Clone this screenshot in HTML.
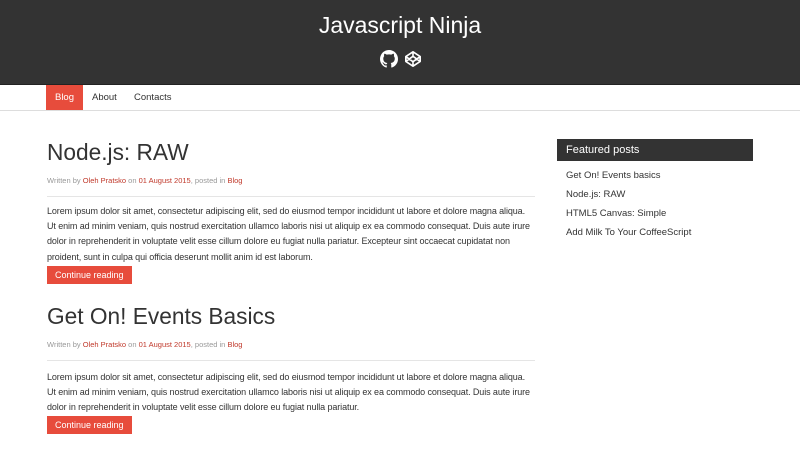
<!DOCTYPE html>
<html><head><meta charset="utf-8"><style>
*{margin:0;padding:0;box-sizing:border-box}
body{width:800px;height:450px;overflow:hidden;font-family:"Liberation Sans",sans-serif;background:#fff;color:#333}
.hd{height:85px;background:#333;text-align:center;color:#fff;border-bottom:1px solid #222}
.hd h1{font-weight:normal;font-size:23px;padding-top:11px;line-height:28px}
.ic{margin-top:11px;display:flex;justify-content:center;gap:6px;padding-left:2px}
.nav{height:26px;border-bottom:1px solid #ddd;position:relative;font-size:9.5px}
.nav a{position:absolute;top:0;height:25px;line-height:26px;color:#333;text-decoration:none}
.main{position:absolute;left:47px;top:137px;width:488px}
h2{font-weight:normal;font-size:22.7px;line-height:30px;color:#333}
.meta{font-size:7.5px;color:#999;margin-top:9px;padding-bottom:11px;border-bottom:1px solid #e5e5e5}
.meta span{color:#c0392b}
p{font-size:9px;letter-spacing:-0.1px;line-height:15.2px;margin-top:7px;color:#333;white-space:nowrap}
.btn{display:inline-block;background:#e74c3c;color:#fff;font-size:9px;height:18px;line-height:18px;padding:0 8px;margin-top:0}
.side{position:absolute;left:557px;top:139px;width:196px}
.side .t{background:#333;color:#fff;font-size:11px;height:22px;line-height:22px;padding-left:9px}
.side div.l{font-size:9.5px;padding-left:9px;height:19px;line-height:19px}
</style></head><body>
<div class="hd"><h1>Javascript Ninja</h1>
<div class="ic">
<svg width="18" height="18" viewBox="0 0 16 16"><path fill="#fff" d="M8 0C3.58 0 0 3.58 0 8c0 3.54 2.29 6.530 5.47 7.59.4.07.55-.17.55-.38 0-.19-.01-.82-.01-1.49-2.01.37-2.53-.49-2.690-.94-.09-.23-.48-.94-.82-1.13-.28-.15-.68-.52-.01-.53.63-.01 1.08.58 1.23.82.72 1.21 1.87.87 2.33.66.07-.52.28-.87.51-1.07-1.78-.2-3.64-.89-3.64-3.950 0-.87.31-1.59.82-2.15-.08-.2-.36-1.02.08-2.12 0 0 .67-.21 2.2.82.64-.18 1.32-.27 2-.27.68 0 1.36.09 2 .27 1.53-1.04 2.2-.82 2.2-.82.44 1.1.16 1.92.08 2.12.51.56.82 1.27.82 2.15 0 3.07-1.870 3.75-3.65 3.95.29.25.54.73.54 1.48 0 1.07-.01 1.930-.01 2.2 0 .21.15.46.55.38A8.013 8.013 0 0016 8c0-4.42-3.58-8-8-8z"/></svg>
<svg width="18" height="18" viewBox="0 0 20 20" fill="none" stroke="#fff" stroke-width="1.8" stroke-linejoin="round"><path d="M10 2L18 7.3V12.7L10 18L2 12.7V7.3Z M10 2V7 M10 13V18 M2 7.3L10 13L18 7.3 M2 12.7L10 7L18 12.7"/></svg>
</div></div>
<div class="nav">
<a style="left:46px;width:37px;background:#e74c3c;color:#fff;text-align:center">Blog</a>
<a style="left:92px">About</a>
<a style="left:134px">Contacts</a>
</div>
<div class="main">
<h2>Node.js: RAW</h2>
<div class="meta">Written by <span>Oleh Pratsko</span> on <span>01 August 2015</span>, posted in <span>Blog</span></div>
<p>Lorem ipsum dolor sit amet, consectetur adipiscing elit, sed do eiusmod tempor incididunt ut labore et dolore magna aliqua.<br>Ut enim ad minim veniam, quis nostrud exercitation ullamco laboris nisi ut aliquip ex ea commodo consequat. Duis aute irure<br>dolor in reprehenderit in voluptate velit esse cillum dolore eu fugiat nulla pariatur. Excepteur sint occaecat cupidatat non<br>proident, sunt in culpa qui officia deserunt mollit anim id est laborum.</p>
<div class="btn">Continue reading</div>
<h2 style="margin-top:17px">Get On! Events Basics</h2>
<div class="meta">Written by <span>Oleh Pratsko</span> on <span>01 August 2015</span>, posted in <span>Blog</span></div>
<p style="margin-top:9px">Lorem ipsum dolor sit amet, consectetur adipiscing elit, sed do eiusmod tempor incididunt ut labore et dolore magna aliqua.<br>Ut enim ad minim veniam, quis nostrud exercitation ullamco laboris nisi ut aliquip ex ea commodo consequat. Duis aute irure<br>dolor in reprehenderit in voluptate velit esse cillum dolore eu fugiat nulla pariatur.</p>
<div class="btn">Continue reading</div>
</div>
<div class="side">
<div class="t">Featured posts</div>
<div style="height:5px"></div>
<div class="l">Get On! Events basics</div>
<div class="l">Node.js: RAW</div>
<div class="l">HTML5 Canvas: Simple</div>
<div class="l">Add Milk To Your CoffeeScript</div>
</div>
</body></html>
